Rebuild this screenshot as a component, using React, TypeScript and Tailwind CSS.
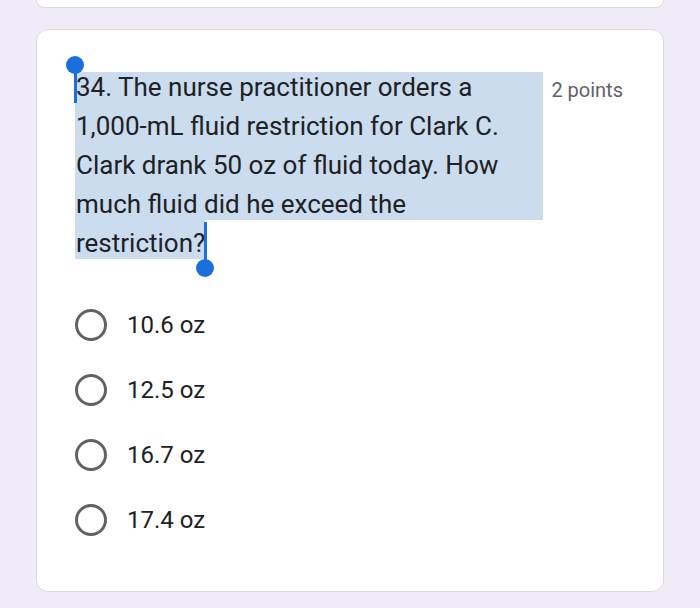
import React from 'react';

const LINES = [
  '34. The nurse practitioner orders a',
  '1,000-mL fluid restriction for Clark C.',
  'Clark drank 50 oz of fluid today. How',
  'much fluid did he exceed the',
];

const OPTIONS = ['10.6 oz', '12.5 oz', '16.7 oz', '17.4 oz'];

const Radio: React.FC<{ label: string }> = ({ label }) => (
  <div className="flex items-center h-[65px]">
    <div className="w-[32px] h-[32px] rounded-full border-[3px] border-[#5f6368] flex-shrink-0" />
    <span className="ml-[20px] text-[24px] text-[#202124]">{label}</span>
  </div>
);

export default function App() {
  return (
    <div
      className="w-[700px] h-[608px] bg-[#efebf7] overflow-hidden"
      style={{ fontFamily: 'Roboto, "Noto Sans", sans-serif' }}
    >
      <div className="mx-[36px] h-[8px] bg-white border border-t-0 border-[#dcd9e3] rounded-b-xl" />

      <div className="mx-[36px] mt-[21px] h-[563px] bg-white border border-[#dcd9e3] rounded-xl pl-[38px] pr-[40px] pt-[42px]">
        <div className="flex items-start">
          <div className="relative w-[470px] text-[26px] leading-[39px] text-[#202124]">
            {/* highlighted lines, box a bit tighter than the line boxes */}
            <div className="flex flex-col bg-[#cadcee]">
              <div className="-my-[4px] pl-[1px]">
                {LINES.map((l) => (
                  <div key={l}>{l}</div>
                ))}
              </div>
            </div>
            <div className="relative block w-fit h-[39px] pt-[4px] pl-[1px] bg-[#cadcee]">
              restriction?
              <div className="absolute right-[-2px] top-[2px] w-[3px] h-[38px] bg-[#1a6fdc]" />
              <div className="absolute right-[-9px] top-[39px] w-[18px] h-[18px] rounded-full bg-[#1a6fdc]" />
            </div>

            <div className="absolute left-[-1px] top-[-2px] w-[3px] h-[33px] bg-[#1a6fdc]" />
            <div className="absolute left-[-9px] top-[-16px] w-[18px] h-[18px] rounded-full bg-[#1a6fdc]" />
          </div>
          <div className="ml-[8px] mt-[3px] text-[20px] text-[#5f6368] whitespace-nowrap">2 points</div>
        </div>

        <div className="mt-[33px]">
          {OPTIONS.map((o) => (
            <Radio key={o} label={o} />
          ))}
        </div>
      </div>
    </div>
  );
}
